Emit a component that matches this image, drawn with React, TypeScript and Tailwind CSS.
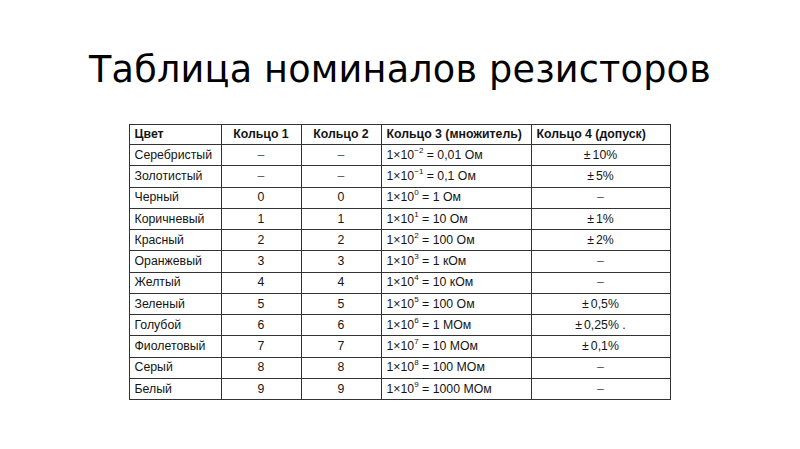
import React from "react";

type Row = { name: string; k1: string; k2: string; exp: string; val: string; tol: string };

const rows: Row[] = [
  { name: "Серебристый", k1: "–", k2: "–", exp: "−2", val: "0,01 Ом", tol: "±10%" },
  { name: "Золотистый", k1: "–", k2: "–", exp: "−1", val: "0,1 Ом", tol: "±5%" },
  { name: "Черный", k1: "0", k2: "0", exp: "0", val: "1 Ом", tol: "–" },
  { name: "Коричневый", k1: "1", k2: "1", exp: "1", val: "10 Ом", tol: "±1%" },
  { name: "Красный", k1: "2", k2: "2", exp: "2", val: "100 Ом", tol: "±2%" },
  { name: "Оранжевый", k1: "3", k2: "3", exp: "3", val: "1 кОм", tol: "–" },
  { name: "Желтый", k1: "4", k2: "4", exp: "4", val: "10 кОм", tol: "–" },
  { name: "Зеленый", k1: "5", k2: "5", exp: "5", val: "100 Ом", tol: "±0,5%" },
  { name: "Голубой", k1: "6", k2: "6", exp: "6", val: "1 МОм", tol: "±0,25% ." },
  { name: "Фиолетовый", k1: "7", k2: "7", exp: "7", val: "10 МОм", tol: "±0,1%" },
  { name: "Серый", k1: "8", k2: "8", exp: "8", val: "100 МОм", tol: "–" },
  { name: "Белый", k1: "9", k2: "9", exp: "9", val: "1000 МОм", tol: "–" },
];

export default function App() {
  return (
    <div className="w-[800px] h-[449px] bg-white flex flex-col items-center overflow-hidden">
      <h1
        className="mt-[44px] text-[36.6px] leading-[52px] text-black tracking-[0.2px]"
        style={{ fontFamily: '"DejaVu Sans", sans-serif' }}
      >
        Таблица номиналов резисторов
      </h1>
      <table
        className="mt-[28px] ml-[-1px] border-collapse border-[1.5px] border-[#222] text-[12.3px] text-[#141414]"
        style={{ fontFamily: '"Liberation Sans", Arial, sans-serif' }}
      >
        <colgroup>
          <col className="w-[92px]" />
          <col className="w-[80px]" />
          <col className="w-[80px]" />
          <col className="w-[150px]" />
          <col className="w-[139px]" />
        </colgroup>
        <thead>
          <tr className="h-[20px]">
            <th className="border border-[#333] px-[5px] text-left font-bold">Цвет</th>
            <th className="border border-[#333] text-center font-bold">Кольцо 1</th>
            <th className="border border-[#333] text-center font-bold">Кольцо 2</th>
            <th className="border border-[#333] px-[5px] text-left font-bold">Кольцо 3 (множитель)</th>
            <th className="border border-[#333] px-[5px] text-left font-bold">Кольцо 4 (допуск)</th>
          </tr>
        </thead>
        <tbody>
          {rows.map((r) => (
            <tr key={r.name} className="h-[21.25px]">
              <td className="border border-[#333] px-[5px] text-left leading-none">{r.name}</td>
              <td className={`border border-[#333] text-center leading-none ${r.k1 === "–" ? "text-[#555]" : ""}`}>{r.k1}</td>
              <td className={`border border-[#333] text-center leading-none ${r.k2 === "–" ? "text-[#555]" : ""}`}>{r.k2}</td>
              <td className="border border-[#333] px-[5px] text-left leading-none whitespace-nowrap">
                1×10<sup className="text-[8px] top-[-0.75em]">{r.exp}</sup> = {r.val}
              </td>
              <td className={`border border-[#333] text-center leading-none whitespace-nowrap ${r.tol === "–" ? "text-[#555]" : ""}`}>
                {r.tol.startsWith("±") ? (
                  <>
                    <span className="mr-[2px]">±</span>
                    {r.tol.slice(1)}
                  </>
                ) : (
                  r.tol
                )}
              </td>
            </tr>
          ))}
        </tbody>
      </table>
    </div>
  );
}
